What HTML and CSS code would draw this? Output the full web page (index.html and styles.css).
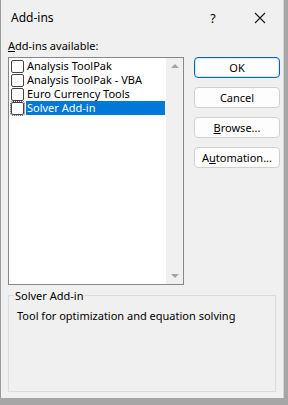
FILE: index.html
```html
<!DOCTYPE html>
<html lang="en">
<head>
  <meta charset="UTF-8" />
  <title>Add-ins</title>
  <link rel="stylesheet" href="styles.css">
</head>
<body>

<div class="dialog">
  <div class="titlebar">
    <span class="title">Add-ins</span>
    <span class="help">?</span>
    <span class="close">
      <svg width="12" height="12" viewBox="0 0 12 12"><path d="M1 1 L11 11 M11 1 L1 11" stroke="#1a1a1a" stroke-width="1.1" fill="none"/></svg>
    </span>
  </div>

  <div class="main">
    <div class="left">
      <div class="label"><u>A</u>dd-ins available:</div>
      <div class="listbox">
        <ul class="items">
          <li><span class="check"></span><span class="name">Analysis ToolPak</span></li>
          <li><span class="check"></span><span class="name">Analysis ToolPak - VBA</span></li>
          <li><span class="check"></span><span class="name">Euro Currency Tools</span></li>
          <li class="selected"><span class="check focus"></span><span class="name">Solver Add-in</span></li>
        </ul>
        <div class="scrollbar">
          <span class="arrow up"></span>
          <span class="arrow down"></span>
        </div>
      </div>
    </div>

    <div class="buttons">
      <button class="btn default">OK</button>
      <button class="btn">Cancel</button>
      <button class="btn"><u>B</u>rowse...</button>
      <button class="btn">A<u>u</u>tomation...</button>
    </div>
  </div>

  <fieldset class="group">
    <legend>Solver Add-in</legend>
    <p class="desc">Tool for optimization and equation solving</p>
  </fieldset>
</div>

</body>
</html>
```

FILE: styles.css
```css
html, body {
  margin: 0;
  padding: 0;
  background: #a6a6a6;
  font-family: "Noto Sans", sans-serif;
  font-size: 11px;
  color: #000;
}

.dialog {
  width: 284px;
  height: 398px;
  background: #f0f0f0;
  border-left: 1px solid #9a9a9a;
  border-right: 1px solid #d4d4d4;
  box-sizing: border-box;
  display: flex;
  flex-direction: column;
}

.titlebar {
  height: 36px;
  display: flex;
  align-items: center;
  padding-left: 10px;
}

.title {
  font-size: 12px;
  flex: 1;
  padding-bottom: 1px;
}

.help {
  font-size: 12.5px;
  width: 46px;
  text-align: center;
  margin-right: 1px;
}

.close {
  width: 46px;
  display: flex;
  justify-content: center;
}

.main {
  display: flex;
  padding: 0 0 0 7px;
  gap: 10px;
}

.left {
  width: 176px;
}

.label {
  height: 21px;
  line-height: 19px;
}

.listbox {
  height: 228px;
  border: 1px solid #828790;
  background: #fff;
  box-sizing: border-box;
  display: flex;
}

.items {
  list-style: none;
  margin: 0;
  padding: 1px 0 0 2px;
  flex: 1;
}

.items li {
  height: 14px;
  display: flex;
  align-items: center;
}

.check {
  width: 11px;
  height: 11px;
  border: 1px solid #444;
  border-radius: 2px;
  background: #fff;
  margin-right: 2px;
  flex: none;
}

.check.focus {
  outline: 1px dotted #555;
  outline-offset: 0;
}

.name {
  height: 14px;
  line-height: 14px;
  padding-left: 1px;
  flex: 1;
  overflow: hidden;
  white-space: nowrap;
}

.selected .name {
  background: #0078d7;
  color: #fff;
  margin-right: 1px;
}

.scrollbar {
  width: 17px;
  background: #f0f0f0;
  display: flex;
  flex-direction: column;
  justify-content: space-between;
  align-items: center;
  padding: 6px 0 6px;
}

.arrow {
  width: 0;
  height: 0;
  border-left: 4px solid transparent;
  border-right: 4px solid transparent;
}

.arrow.up { border-bottom: 4px solid #a3a3a3; }
.arrow.down { border-top: 4px solid #a3a3a3; }

.buttons {
  display: flex;
  flex-direction: column;
  gap: 9px;
  padding-top: 21px;
}

.btn {
  width: 86px;
  height: 21px;
  font-family: "Noto Sans", sans-serif;
  font-size: 11px;
  background: #fdfdfd;
  border: 1px solid #d0d0d0;
  border-radius: 4px;
  padding: 0;
  color: #000;
}

.btn.default {
  border: 1px solid #0067c0;
  box-shadow: inset 0 0 0 1px #d8e6f5;
}

.group {
  margin: 3px 7px 0 7px;
  padding: 2px 8px 0;
  border: 1px solid #dcdcdc;
  height: 104px;
  box-sizing: border-box;
}

.group legend {
  padding: 0 1px;
  margin-left: -3px;
}

.desc {
  margin: 3px 0 0;
}
```
